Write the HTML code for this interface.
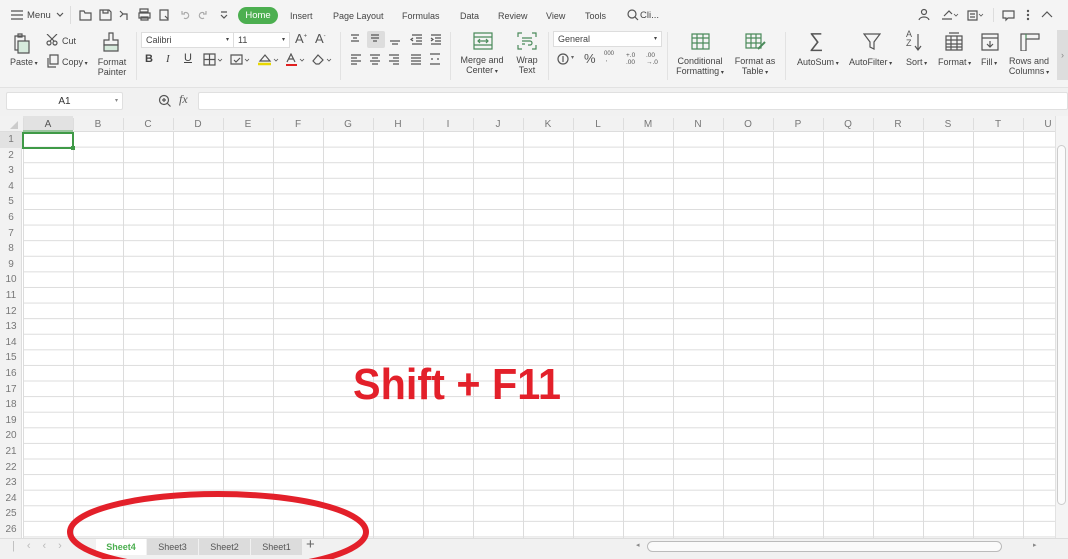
<!DOCTYPE html>
<html><head><meta charset="utf-8"><style>
*{margin:0;padding:0;box-sizing:border-box}
body{width:1068px;height:559px;overflow:hidden;background:#fff;font-family:"Liberation Sans",sans-serif;color:#333;position:relative}
.a{position:absolute;white-space:nowrap}
.t{font-size:9px;color:#444}
.lbl{font-size:9px;color:#444;text-align:center;line-height:10px}
svg.i{position:absolute;fill:none;stroke:#555;stroke-width:1.2}
.ch{position:absolute;top:117px;height:15px;width:50px;text-align:center;font-size:10px;color:#777;line-height:15px}
.rh{position:absolute;left:0;width:22px;text-align:center;font-size:10px;color:#777;height:15.6px;line-height:16px}
.tab{position:absolute;top:539px;height:16px;font-size:9px;line-height:16px;text-align:center;color:#555}
</style></head><body>
<div class="a" style="left:0;top:0;width:1068px;height:88px;background:#f4f4f4;border-bottom:1px solid #e2e2e2"></div>
<div class="a" style="left:0;top:88px;width:1068px;height:28px;background:#f1f1f1"></div>
<svg class="i" style="left:11px;top:10px" width="12" height="10"><path d="M0 1h12M0 5h12M0 9h12"/></svg>
<div class="a t" style="left:27px;top:10px;font-size:9.5px">Menu</div>
<svg class="i" style="left:56px;top:12px" width="8" height="6"><path d="M1 1l3 3 3-3"/></svg>
<div class="a" style="left:70px;top:6px;width:1px;height:18px;background:#ddd"></div>
<svg class="i" style="left:78px;top:8px" width="160" height="14"><path d="M2 3h4l1 2h6v7H2z"/><path d="M22 2h9l2 2v8H22zM25 2v3h5V2"/><path d="M42 3l3 3-3 3M45 6h4v6"/><path d="M62 4h8v-3h-8zM61 5h11v5H61zM63 9h7v3h-7z"/><path d="M82 2h8v10h-8zM87 8l3 3"/><path d="M106 5a3 3 0 1 1 0 5M104 3v3h3" stroke="#aaa"/><path d="M126 5a3 3 0 1 0 0 5M128 3v3h-3" stroke="#aaa"/><path d="M143 4h6M143 7l3 3 3-3"/></svg>
<div class="a" style="left:238px;top:7px;width:40px;height:17px;border-radius:9px;background:#4caf50;color:#fff;font-size:9.5px;line-height:17px;text-align:center">Home</div>
<div class="a t" style="left:290px;top:11px;font-size:9px">Insert</div>
<div class="a t" style="left:333px;top:11px;font-size:9px">Page Layout</div>
<div class="a t" style="left:402px;top:11px;font-size:9px">Formulas</div>
<div class="a t" style="left:460px;top:11px;font-size:9px">Data</div>
<div class="a t" style="left:498px;top:11px;font-size:9px">Review</div>
<div class="a t" style="left:546px;top:11px;font-size:9px">View</div>
<div class="a t" style="left:585px;top:11px;font-size:9px">Tools</div>
<svg class="i" style="left:627px;top:9px" width="12" height="12"><circle cx="5" cy="5" r="4"/><path d="M8 8l3 3"/></svg>
<div class="a t" style="left:640px;top:10px;font-size:9.5px">Cli...</div>
<svg class="i" style="left:916px;top:8px" width="150" height="14"><circle cx="8" cy="4" r="2.5"/><path d="M3 12c1-4 9-4 10 0"/><path d="M26 11h10M28 8l5-5 3 3" /><path d="M38 6l2 2 2-2" stroke-width="0.8"/><path d="M52 3h9v9h-9zM54 6h5M54 9h5"/><path d="M63 6l2 2 2-2" stroke-width="0.8"/><path d="M87 3h11v7h-6l-2 2v-2h-3z"/><circle cx="112" cy="3" r=".6"/><circle cx="112" cy="7" r=".6"/><circle cx="112" cy="11" r=".6"/><path d="M126 9l5-5 5 5"/></svg>
<div class="a" style="left:993px;top:8px;width:1px;height:14px;background:#ddd"></div>

<svg class="i" style="left:12px;top:33px" width="20" height="22"><path d="M3 3h10v14H3z"/><path d="M6 8h11v12H6z" fill="#d6eadc" stroke="#555"/><path d="M6 1h4v3H6z"/></svg>
<div class="a t" style="left:10px;top:57px">Paste<span style="font-size:6px"> ▾</span></div>
<svg class="i" style="left:46px;top:34px" width="14" height="12"><circle cx="3" cy="9" r="2"/><circle cx="9" cy="9" r="2"/><path d="M4 7l7-7M8 7L1 0"/></svg>
<div class="a t" style="left:62px;top:36px">Cut</div>
<svg class="i" style="left:46px;top:54px" width="14" height="14"><path d="M4 1h8v9H4z"/><path d="M2 4v9h8"/></svg>
<div class="a t" style="left:62px;top:57px">Copy<span style="font-size:6px"> ▾</span></div>
<svg class="i" style="left:102px;top:32px" width="18" height="22"><path d="M7 1h4v7h5v5H2V8h5z"/><path d="M2 13h14v6H2z" fill="#d6eadc" stroke="#555"/></svg>
<div class="a lbl" style="left:92px;top:57px;width:40px">Format<br>Painter</div>
<div class="a" style="left:136px;top:32px;width:1px;height:48px;background:#e2e2e2"></div>
<div class="a" style="left:141px;top:32px;width:93px;height:16px;background:#fff;border:1px solid #ddd;font-size:9px;line-height:14px;padding-left:4px;color:#444">Calibri<span style="position:absolute;right:4px;font-size:6px">▾</span></div>
<div class="a" style="left:233px;top:32px;width:57px;height:16px;background:#fff;border:1px solid #ddd;font-size:9px;line-height:14px;padding-left:4px;color:#444">11<span style="position:absolute;right:4px;font-size:6px">▾</span></div>
<div class="a" style="left:295px;top:31px;font-size:13px;color:#555">A<sup style="font-size:6px">+</sup></div>
<div class="a" style="left:315px;top:31px;font-size:13px;color:#555">A<sup style="font-size:6px">-</sup></div>
<div class="a" style="left:145px;top:53px;font-size:11px;font-weight:bold;color:#444">B</div>
<div class="a" style="left:166px;top:53px;font-size:11px;font-style:italic;color:#444;font-family:'Liberation Serif',serif">I</div>
<div class="a" style="left:184px;top:52px;font-size:11px;text-decoration:underline;color:#444">U</div>
<svg class="i" style="left:203px;top:53px" width="130" height="14"><path d="M1 1h11v11H1zM1 6.5h11M6.5 1v11"/><path d="M15 6l2 2 2-2" stroke-width=".8"/><path d="M28 2h11v9H28zM31 7l2 2 4-4"/><path d="M42 6l2 2 2-2" stroke-width=".8"/><path d="M57 8l5-6 5 6z"/><path d="M55 11h13" stroke="#e8d800" stroke-width="2.5"/><path d="M71 6l2 2 2-2" stroke-width=".8"/><path d="M84 9l4-8 4 8M85.5 6h5"/><path d="M83 12h11" stroke="#e02020" stroke-width="2"/><path d="M97 6l2 2 2-2" stroke-width=".8"/><path d="M113 11l-3-3 5-6 5 5-4 4z"/><path d="M124 6l2 2 2-2" stroke-width=".8"/></svg>
<div class="a" style="left:340px;top:32px;width:1px;height:48px;background:#e2e2e2"></div>
<div class="a" style="left:367px;top:31px;width:18px;height:17px;background:#ddd;border-radius:2px"></div>
<svg class="i" style="left:349px;top:33px" width="100" height="34"><path d="M2 2h8M4 5h4M2 8h8"/><path d="M22 5h8M24 8h4M22 2h8"/><path d="M43 11h6M41 8h10" /><path d="M63 2h10M67 5h6M67 8h6M63 11h10M64 5l-2 1.5 2 1.5"/><path d="M82 2h10M86 5h6M86 8h6M82 11h10M82 5l2 1.5-2 1.5"/><path d="M2 22h10M2 25h6M2 28h10M2 31h6"/><path d="M21 22h10M23 25h6M21 28h10M23 31h6"/><path d="M40 22h10M44 25h6M40 28h10M44 31h6"/><path d="M62 22h10M62 25h10M62 28h10M62 31h10"/><path d="M81 21h10M81 31h10M82 26h2M88 26h2"/></svg>
<div class="a" style="left:450px;top:32px;width:1px;height:48px;background:#e2e2e2"></div>
<svg class="i" style="left:473px;top:32px" width="20" height="18"><path d="M1 1h18v16H1zM1 5h18M1 13h18M5 9h10M7 7l-2 2 2 2M13 7l2 2-2 2" stroke="#4a8a5a"/></svg>
<div class="a lbl" style="left:456px;top:55px;width:52px">Merge and<br>Center<span style="font-size:6px"> ▾</span></div>
<svg class="i" style="left:517px;top:32px" width="20" height="18"><path d="M1 5V1h4M15 1h4v4M1 13v4h4M15 17h4v-4M5 6h10M5 9h8a2 2 0 0 1 0 4h-2M5 12h3" stroke="#4a8a5a"/></svg>
<div class="a lbl" style="left:509px;top:55px;width:36px">Wrap<br>Text</div>
<div class="a" style="left:548px;top:32px;width:1px;height:48px;background:#e2e2e2"></div>
<div class="a" style="left:553px;top:31px;width:109px;height:16px;background:#fff;border:1px solid #ddd;font-size:9px;line-height:14px;padding-left:4px;color:#444">General<span style="position:absolute;right:4px;font-size:6px">▾</span></div>
<svg class="i" style="left:557px;top:53px" width="12" height="12"><circle cx="6" cy="6" r="5"/><path d="M6 3v6"/></svg>
<div class="a" style="left:571px;top:54px;font-size:6px;color:#666">▾</div>
<div class="a" style="left:584px;top:51px;font-size:13px;color:#555">%</div>
<div class="a" style="left:604px;top:51px;font-size:6px;color:#555;line-height:6px">000<br>&nbsp;,</div>
<div class="a" style="left:626px;top:52px;font-size:6.5px;color:#555;line-height:7px">+.0<br>.00</div>
<div class="a" style="left:646px;top:52px;font-size:6.5px;color:#555;line-height:7px">.00<br>→.0</div>
<div class="a" style="left:667px;top:32px;width:1px;height:48px;background:#e2e2e2"></div>
<svg class="i" style="left:691px;top:33px" width="20" height="18"><path d="M1 1h17v15H1zM1 5h17M1 10h17M6 1v15M12 1v15" stroke="#4a8a5a"/></svg>
<div class="a lbl" style="left:671px;top:56px;width:58px">Conditional<br>Formatting<span style="font-size:6px"> ▾</span></div>
<svg class="i" style="left:745px;top:33px" width="22" height="18"><path d="M1 1h15v14H1zM1 5h15M1 10h15M6 1v14M11 1v14" stroke="#4a8a5a"/><path d="M13 16l7-7" stroke="#4a8a5a" stroke-width="2"/></svg>
<div class="a lbl" style="left:730px;top:56px;width:50px">Format as<br>Table<span style="font-size:6px"> ▾</span></div>
<div class="a" style="left:785px;top:32px;width:1px;height:48px;background:#e2e2e2"></div>
<div class="a" style="left:809px;top:30px;font-size:20px;color:#555">∑</div>
<div class="a t" style="left:797px;top:57px">AutoSum<span style="font-size:6px"> ▾</span></div>
<svg class="i" style="left:863px;top:33px" width="18" height="18"><path d="M1 1h16l-6 8v7l-4-2V9z"/></svg>
<div class="a t" style="left:849px;top:57px">AutoFilter<span style="font-size:6px"> ▾</span></div>
<div class="a" style="left:906px;top:30px;font-size:9px;color:#555;line-height:9px">A<br>Z</div>
<svg class="i" style="left:913px;top:33px" width="10" height="18"><path d="M5 1v16M2 13l3 4 3-4"/></svg>
<div class="a t" style="left:906px;top:57px">Sort<span style="font-size:6px"> ▾</span></div>
<svg class="i" style="left:945px;top:32px" width="18" height="20"><path d="M1 4h16v14H1zM1 8h16M1 12h16M1 15h16M6 4v14M12 4v14M4 1h10"/></svg>
<div class="a t" style="left:938px;top:57px">Format<span style="font-size:6px"> ▾</span></div>
<svg class="i" style="left:981px;top:33px" width="18" height="18"><path d="M1 1h16v16H1zM1 5h16M9 8v6M6 11l3 3 3-3"/></svg>
<div class="a t" style="left:981px;top:57px">Fill<span style="font-size:6px"> ▾</span></div>
<svg class="i" style="left:1020px;top:33px" width="20" height="18"><path d="M1 1h18v5H6v12H1z"/><path d="M6 1v5" stroke="#4a8a5a"/></svg>
<div class="a lbl" style="left:1006px;top:56px;width:46px">Rows and<br>Columns<span style="font-size:6px"> ▾</span></div>
<div class="a" style="left:1057px;top:30px;width:11px;height:50px;background:#ddd;font-size:9px;color:#888;line-height:50px;text-align:center">›</div>

<div class="a" style="left:6px;top:92px;width:117px;height:18px;background:#fff;border:1px solid #e0e0e0;border-radius:2px;font-size:10px;text-align:center;line-height:17px;color:#333">A1<span style="position:absolute;right:4px;font-size:6px;color:#888">▾</span></div>
<svg class="i" style="left:158px;top:94px" width="14" height="14"><circle cx="6" cy="6" r="4.5"/><path d="M9.5 9.5l3 3M4 6h4M6 4v4"/></svg>
<div class="a" style="left:179px;top:92px;font-size:12px;font-style:italic;color:#555;font-family:'Liberation Serif',serif">fx</div>
<div class="a" style="left:198px;top:92px;width:870px;height:18px;background:#fff;border:1px solid #e0e0e0;border-radius:2px"></div>

<div class="a" style="left:0;top:116px;width:1068px;height:16px;background:#f2f2f2;border-bottom:1px solid #ddd"></div>
<div class="a" style="left:0;top:132px;width:22px;height:406px;background:#f2f2f2;border-right:1px solid #ddd"></div>
<div class="a" style="left:23px;top:116px;width:50px;height:16px;background:#e2e2e2;border-bottom:2px solid #9bc59f"></div>
<div class="a" style="left:0;top:132px;width:22px;height:16px;background:#e2e2e2"></div>
<svg class="a" style="left:10px;top:121px" width="8" height="8"><path d="M8 0v8H0z" fill="#ccc"/></svg>
<div class="a" style="left:23px;top:132px;width:1033px;height:406px;background-image:linear-gradient(to right,#dcdcdc 1px,transparent 1px),linear-gradient(to bottom,transparent 14.6px,#dcdcdc 14.6px);background-size:50px 100%,100% 15.6px;background-position:50px 0,0 0"></div>
<div class="a" style="left:22px;top:132px;width:52px;height:17px;border:2px solid #3f9a47"></div>
<div class="a" style="left:71px;top:146px;width:4px;height:4px;background:#3f9a47"></div>

<div class="ch" style="left:23px;color:#555">A</div><div class="ch" style="left:73px">B</div><div class="ch" style="left:123px">C</div><div class="ch" style="left:173px">D</div><div class="ch" style="left:223px">E</div><div class="ch" style="left:273px">F</div><div class="ch" style="left:323px">G</div><div class="ch" style="left:373px">H</div><div class="ch" style="left:423px">I</div><div class="ch" style="left:473px">J</div><div class="ch" style="left:523px">K</div><div class="ch" style="left:573px">L</div><div class="ch" style="left:623px">M</div><div class="ch" style="left:673px">N</div><div class="ch" style="left:723px">O</div><div class="ch" style="left:773px">P</div><div class="ch" style="left:823px">Q</div><div class="ch" style="left:873px">R</div><div class="ch" style="left:923px">S</div><div class="ch" style="left:973px">T</div><div class="ch" style="left:1023px">U</div>
<div class="a" style="left:23px;top:118px;width:1033px;height:12px;background-image:linear-gradient(to right,#ddd 1px,transparent 1px);background-size:50px 100%;background-position:50px 0"></div>

<div class="rh" style="top:132.0px">1</div><div class="rh" style="top:147.6px">2</div><div class="rh" style="top:163.2px">3</div><div class="rh" style="top:178.8px">4</div><div class="rh" style="top:194.4px">5</div><div class="rh" style="top:210.0px">6</div><div class="rh" style="top:225.6px">7</div><div class="rh" style="top:241.2px">8</div><div class="rh" style="top:256.8px">9</div><div class="rh" style="top:272.4px">10</div><div class="rh" style="top:288.0px">11</div><div class="rh" style="top:303.6px">12</div><div class="rh" style="top:319.2px">13</div><div class="rh" style="top:334.8px">14</div><div class="rh" style="top:350.4px">15</div><div class="rh" style="top:366.0px">16</div><div class="rh" style="top:381.6px">17</div><div class="rh" style="top:397.2px">18</div><div class="rh" style="top:412.8px">19</div><div class="rh" style="top:428.4px">20</div><div class="rh" style="top:444.0px">21</div><div class="rh" style="top:459.6px">22</div><div class="rh" style="top:475.2px">23</div><div class="rh" style="top:490.8px">24</div><div class="rh" style="top:506.4px">25</div><div class="rh" style="top:522.0px">26</div>

<div class="a" style="left:1055px;top:116px;width:13px;height:422px;background:#f4f4f4;border-left:1px solid #e2e2e2"></div>
<div class="a" style="left:1057px;top:145px;width:9px;height:360px;border:1px solid #ccc;border-radius:5px;background:#fbfbfb"></div>

<div class="a" style="left:0;top:538px;width:1068px;height:21px;background:#f1f1f1;border-top:1px solid #ddd"></div>
<div class="a" style="left:12px;top:540px;font-size:11px;color:#bbb;letter-spacing:12px">|‹‹›</div>
<div class="tab" style="left:96px;width:50px;background:#fff;color:#4caf50;font-weight:bold">Sheet4</div>
<div class="tab" style="left:147px;width:51px;background:#dcdcdc">Sheet3</div>
<div class="tab" style="left:199px;width:51px;background:#dcdcdc">Sheet2</div>
<div class="tab" style="left:251px;width:51px;background:#dcdcdc">Sheet1</div>
<div class="a" style="left:306px;top:536px;font-size:15px;color:#666">+</div>
<div class="a" style="left:647px;top:541px;width:355px;height:11px;border:1px solid #bbb;border-radius:6px;background:#fafafa"></div>
<div class="a" style="left:636px;top:541px;font-size:7px;color:#888">◂</div>
<div class="a" style="left:1033px;top:541px;font-size:7px;color:#888">▸</div>

<div class="a" style="left:353px;top:360px;font-size:44px;font-weight:bold;color:#e3202a;transform:scaleX(0.94);transform-origin:0 0">Shift + F11</div>
<svg class="a" style="left:0;top:480px" width="420" height="79"><ellipse cx="218" cy="532" rx="148" ry="38" transform="translate(0,-480)" fill="none" stroke="#e3202a" stroke-width="6"/></svg>
</body></html>
